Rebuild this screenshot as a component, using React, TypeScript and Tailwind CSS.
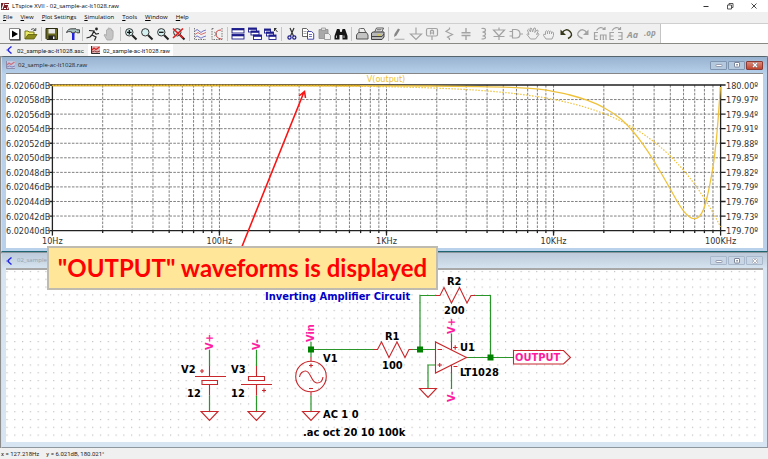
import type { ReactNode } from 'react';
import clsx from 'clsx';

interface Tool {
  label: string;
  icon: ReactNode;
}

interface ToolGroup {
  width: string;
  tools: Tool[];
}

const GRAY = '#a3a3a3';
const NAVY = '#1c1c8c';

const gray = { fill: 'none', stroke: GRAY, strokeWidth: 1.2 };

const magnifier = (
  <>
    <circle cx="6.3" cy="6.3" r="3.7" fill="#d5f0f0" stroke="#333" strokeWidth="1" />
    <path d="M9.2 9.2l4.3 4.3" stroke="#222" strokeWidth="2" />
  </>
);

const miniWindow = (x: number, y: number, w: number, h: number) => (
  <g>
    <rect x={x} y={y} width={w} height={h} fill="#fff" stroke={NAVY} strokeWidth="0.9" />
    <rect x={x} y={y} width={w} height={1.8} fill={NAVY} />
  </g>
);

const groups: ToolGroup[] = [
  {
    width: 'w-[37px]',
    tools: [
      {
        label: 'Run',
        icon: (
          <>
            <path d="M2.5 2.5h10v11h-10z" fill="#fff" stroke="#888" />
            <path d="M13 3v11H3" fill="none" stroke="#222" strokeWidth="1.2" />
            <path d="M5 4.5l6 3.5-6 3.5z" fill="#000" />
          </>
        ),
      },
      {
        label: 'Open',
        icon: (
          <>
            <path d="M2 13V5h3l1 1h5v3" fill="#ecec6a" stroke="#77771a" />
            <path d="M2 13l3-4.5h9L11 13z" fill="#8c8c1c" stroke="#5c5c10" strokeWidth="0.8" />
            <path d="M8 3.5q2.5-2 4.5 0.5M12.8 2v2.5h-2.5" fill="none" stroke="#444" strokeWidth="0.9" />
          </>
        ),
      },
    ],
  },
  {
    width: 'w-[21px]',
    tools: [
      {
        label: 'Save',
        icon: (
          <>
            <path d="M2 2.5h11.5v11H3l-1-1z" fill="#6b6b22" stroke="#2a2a10" />
            <path d="M4.5 3h6.5v4.5H4.5z" fill="#e6e6e6" />
            <path d="M4.5 9.5h7v4h-7z" fill="#222" />
            <path d="M9 10.5h1.5v2.5H9z" fill="#eee" />
          </>
        ),
      },
    ],
  },
  {
    width: 'w-[20px]',
    tools: [
      {
        label: 'Control Panel',
        icon: (
          <>
            <path d="M1.5 6.5Q3 2.5 7 2.8h4l1 1h2.5v3H12l-1-1h-1v1H6.5v-1Q3.5 5 1.5 6.5z" fill="#a9c3c3" stroke="#333" strokeWidth="0.9" />
            <path d="M7 7h2.5v7H7z" fill="#2424dc" />
          </>
        ),
      },
    ],
  },
  {
    width: 'w-[38px]',
    tools: [
      {
        label: 'Start simulation',
        icon: (
          <>
            <circle cx="11.5" cy="3" r="1.4" fill="#222" />
            <path d="M4 4.5l5 0.5-2 4 4 2-1.5 3.5M7 9l-2 2-3.5 1M9 5.5l2 2.5 3-0.5" fill="none" stroke="#222" strokeWidth="1.2" />
          </>
        ),
      },
      {
        label: 'Halt',
        icon: (
          <path
            d="M5 14l-3-5q0.5-1.5 2.5 0.5V4q1-1.5 1.5 0V2.5q1-1.5 1.8 0V3q1-1.3 1.7 0v1.5q1-1 1.6 0.5v5q0 3-1.5 4z"
            fill="#c4c4c4"
            stroke="#a6a6a6"
            strokeWidth="0.8"
          />
        ),
      },
    ],
  },
  {
    width: 'w-[69px]',
    tools: [
      {
        label: 'Zoom in',
        icon: (
          <>
            {magnifier}
            <path d="M4 6.3h4.6M6.3 4v4.6" stroke="#111" strokeWidth="1.3" />
          </>
        ),
      },
      { label: 'Pan', icon: magnifier },
      {
        label: 'Zoom out',
        icon: (
          <>
            {magnifier}
            <path d="M4 6.3h4.6" stroke="#111" strokeWidth="1.3" />
          </>
        ),
      },
      {
        label: 'Zoom full extents',
        icon: (
          <>
            {magnifier}
            <path d="M2 2.5l10 9.5M12 2.5L2 12" stroke="#e02020" strokeWidth="1.7" />
          </>
        ),
      },
    ],
  },
  {
    width: 'w-[38px]',
    tools: [
      {
        label: 'Autorange',
        icon: (
          <>
            <path d="M2.5 2v11.5H14" fill="none" stroke="#777" strokeDasharray="1.5 1" />
            <path d="M3 5.5q2-3.5 4-0.5t4 0l3-1" fill="none" stroke="#6a6ac4" strokeWidth="0.9" />
            <path d="M3 8.5l3-2 3 2 5-2" fill="none" stroke="#d86060" strokeWidth="0.9" />
            <path d="M3 11.5q2-3 4-0.5t4 0l3-1" fill="none" stroke="#6a6ac4" strokeWidth="0.9" />
          </>
        ),
      },
      {
        label: 'Plot limits',
        icon: (
          <>
            <path d="M3 2.5v11h10M3 2.5H5M13 2v12" fill="none" stroke="#777" strokeDasharray="1.5 1" />
            <path d="M12 4Q7 4 7 8t5 5" fill="none" stroke="#cf4242" />
            <path d="M5 6l3 2-3 2" fill="none" stroke="#777" strokeWidth="0.7" />
          </>
        ),
      },
    ],
  },
  {
    width: 'w-[54px]',
    tools: [
      {
        label: 'Tile windows',
        icon: (
          <>
            {miniWindow(2, 2.5, 12, 4.5)}
            {miniWindow(2, 8.5, 12, 4.5)}
          </>
        ),
      },
      {
        label: 'Cascade windows',
        icon: (
          <>
            {miniWindow(1.5, 2, 8, 4)}
            {miniWindow(4, 5, 8, 4)}
            {miniWindow(6.5, 9, 8, 4.5)}
          </>
        ),
      },
      {
        label: 'Close windows',
        icon: (
          <>
            {miniWindow(1.5, 3, 6, 4)}
            {miniWindow(3.5, 6, 7, 4)}
            {miniWindow(6, 9, 7, 4.5)}
            <path d="M11 2.5h2.5M11.5 2v3M11.5 2.5l3 3.5" fill="none" stroke="#333" />
          </>
        ),
      },
    ],
  },
  {
    width: 'w-[70px]',
    tools: [
      {
        label: 'Cut',
        icon: (
          <>
            <path d="M6 2l3.5 8M10 2L6.5 10" stroke="#333" strokeWidth="1.2" />
            <circle cx="5.5" cy="11.5" r="1.6" fill="none" stroke={NAVY} strokeWidth="1.2" />
            <circle cx="10.3" cy="11.5" r="1.6" fill="none" stroke={NAVY} strokeWidth="1.2" />
          </>
        ),
      },
      {
        label: 'Copy',
        icon: (
          <>
            <path d="M2.5 2.5h4l2 2v6h-6z" fill="#fff" stroke="#555" strokeWidth="0.9" />
            <path d="M3.5 5.5h3M3.5 7.5h3" stroke="#888" strokeWidth="0.7" />
            <path d="M7.5 5.5h4l2.2 2v5.7H7.5z" fill="#fff" stroke="#3434a4" strokeWidth="0.9" />
            <path d="M9 8.5h3M9 10.5h3" stroke="#3434a4" strokeWidth="0.7" />
          </>
        ),
      },
      {
        label: 'Paste',
        icon: (
          <>
            <path d="M2 3.5h9v9H2z" fill="#a9a9a9" stroke="#8c8c8c" strokeWidth="0.8" />
            <path d="M4.5 2h4v2.5h-4z" fill="#ddd" stroke="#8c8c8c" strokeWidth="0.7" />
            <path d="M7.5 7.5h4l2 2v4h-6z" fill="#eee" stroke="#8c8c8c" strokeWidth="0.8" />
          </>
        ),
      },
      {
        label: 'Find',
        icon: (
          <>
            <path d="M4 3h2.5l0.8 3h1.4l0.8-3H12l2.5 7v3.5h-5V9h-3v4.5h-5V10z" fill="#151515" />
            <path d="M3.5 9.5v2.5M11 9.5v2.5" stroke="#ddd" strokeWidth="0.8" />
          </>
        ),
      },
    ],
  },
  {
    width: 'w-[37px]',
    tools: [
      {
        label: 'Print preview',
        icon: (
          <>
            <path d="M5 7V3.5Q5 2.5 6.5 2.5H10L12 7" fill="#eee" stroke="#666" />
            <path d="M2.5 9l2-2.5h8l1.5 2.5v4h-11.5z" fill="#c3c3c3" stroke="#555" />
          </>
        ),
      },
      {
        label: 'Print',
        icon: (
          <>
            <path d="M4.5 6.5L6.5 2h7l-2 4.5" fill="#fff" stroke="#444" strokeWidth="0.9" />
            <path d="M7 3.5h4.5M6.3 5h4.5" stroke="#555" strokeWidth="0.7" />
            <path d="M1.5 7l1.5-1h11v5l-2 2.5H1.5z" fill="#b9b9b9" stroke="#444" />
            <path d="M1.5 10.5H12L14 8" fill="none" stroke="#444" />
            <path d="M8 9h2.5" stroke="#e0d020" strokeWidth="1.2" />
          </>
        ),
      },
    ],
  },
  {
    width: 'w-[271px]',
    tools: [
      {
        label: 'Wire',
        icon: (
          <>
            <path d="M3 11l0.5-3L7 2.5l2 1L5.5 9.5z" fill="#858585" />
            <path d="M3.5 13.3H13.5" stroke="#b5b5b5" strokeWidth="1.2" />
          </>
        ),
      },
      { label: 'Ground', icon: <path d="M8 1.5v6.5M2.5 8h11L8 13.5z" {...gray} /> },
      {
        label: 'Label net',
        icon: (
          <>
            <rect x="2.5" y="2.5" width="11" height="7.5" rx="1.5" {...gray} />
            <path d="M6.5 8.5V5q1.5-1.5 3 0v3.5M6.5 7h3M8 10v4" {...gray} />
          </>
        ),
      },
      { label: 'Resistor', icon: <path d="M8.5 1.5v1.5L5 5.5l6.5 3L6.5 11l2 1.5V14" {...gray} /> },
      { label: 'Capacitor', icon: <path d="M8 2v4.5M3.5 6.8h9M3.5 9.5h9M8 9.5V14" {...gray} strokeWidth="1.4" /> },
      {
        label: 'Inductor',
        icon: <path d="M6.5 2.5q4-0.5 4 1.5T7.5 6.2q3 0 3 1.8t-3 2q3 0 3 1.5t-4 1.5" {...gray} />,
      },
      { label: 'Diode', icon: <path d="M8 1.5V4M2.5 4h11L8 10zM2.5 10.5h11M8 10.5V14" {...gray} /> },
      {
        label: 'Component',
        icon: <path d="M4.5 3.5H8q4 0.5 4 4.5t-4 4H4.5zM1.5 5.5h3M1.5 10h3M12 8h3" {...gray} />,
      },
      {
        label: 'Move',
        icon: (
          <path
            d="M5.5 13L2 8.5q0-1.5 2 0L2.5 4q1-1.5 2 0l1 2-0.5-3.5q1.2-1.2 1.8 0.5L7.5 6l1.5-4q1.5-0.5 1.5 1L9.8 6.5 12 4q1.5 0 1 1.5l-1.5 3 2-1q1 0.5 0 1.5l-3 4z"
            {...gray}
            strokeWidth="1"
          />
        ),
      },
      {
        label: 'Drag',
        icon: (
          <path
            d="M5 13l-2.5-3.5q-0.5-2 2-1V5.5q1.2-1.5 2 0 1-1.5 2 0 1.2-1 2 0.5 1.5-0.5 2 1v2.5L11 13zM6.5 5.5V8M8.5 5.5V8M10.5 6v2"
            {...gray}
            strokeWidth="1"
          />
        ),
      },
      {
        label: 'Undo',
        icon: (
          <>
            <path d="M4 7Q8 1.5 12 5.5t-2 7" fill="none" stroke="#38381c" strokeWidth="1.5" />
            <path d="M2.5 3.5V9H8z" fill="#38381c" />
          </>
        ),
      },
      {
        label: 'Redo',
        icon: (
          <>
            <path d="M12 7Q8 1.5 4 5.5t3.5 7" {...gray} strokeWidth="1.4" />
            <path d="M13.5 3.5V9H8z" fill={GRAY} />
          </>
        ),
      },
      {
        label: 'Rotate',
        icon: (
          <path
            d="M6 6.5H2.5v7H6M2.5 10H5.5M8.5 14V9h5.5V14M11.3 9V14M4.5 4.5Q8-0.5 12.5 3M13 1v2.5h-2.5"
            {...gray}
          />
        ),
      },
      {
        label: 'Mirror',
        icon: <path d="M6 6.5H2v7h4M2 10h3.5M10 6.5h4v7h-4M14 10h-3.5M4 4.5Q8-0.5 12 3M12.5 1v2.5H10" {...gray} />,
      },
      {
        label: 'Text',
        icon: (
          <text x="2" y="12" fontSize="9" fill="#999" fontWeight="bold" fontStyle="italic">
            Aa
          </text>
        ),
      },
      {
        label: 'SPICE directive',
        icon: (
          <text x="2" y="10" fontSize="8" fill="#999" fontWeight="bold" fontStyle="italic">
            .op
          </text>
        ),
      },
    ],
  },
];

const menus = ['File', 'View', 'Plot Settings', 'Simulation', 'Tools', 'Window', 'Help'];

function SchematicIcon() {
  return (
    <svg viewBox="0 0 8 8" className="size-2 shrink-0" fill="none" stroke="#2424e8">
      <path d="M5.5 0.5L2.5 3v2l3 2.5" strokeWidth="1.4" />
      <path d="M0.5 4h2" />
    </svg>
  );
}

function WaveIcon({ faded }: { faded?: boolean }) {
  return (
    <svg viewBox="0 0 9 8" className="h-2 w-[9px] shrink-0">
      <rect width="9" height="8" fill={faded ? '#c3c9de' : '#e0b4b4'} />
      <path d="M0.5 0v7.5H9" fill="none" stroke={faded ? '#8c8cac' : '#333'} />
      <path d="M1 4l2-2 2 1.5L8.5 1" fill="none" stroke={faded ? '#cc7080' : '#dc2626'} strokeWidth="1.2" />
      <path d="M1 6l2.5-1L6 6l3-1" fill="none" stroke={faded ? '#7070b8' : '#7c2020'} strokeWidth="0.8" />
    </svg>
  );
}

function TitleBar() {
  return (
    <header className="flex h-3 items-center bg-white pl-px">
      <svg viewBox="0 0 9 9" className="size-[9px]">
        <rect y="1" width="8" height="7" fill="#7a1c24" />
        <path d="M1 7L3 1.5M3 6.5h2M4 2.5h4L6.5 7" stroke="#fff" strokeWidth="1.1" fill="none" />
      </svg>
      <h1 className="ml-0.5 flex-1 text-[6px]/[12px] text-black">LTspice XVII - 02_sample-ac-lt1028.raw</h1>
      <div className="flex gap-2 pr-1.5">
        <button aria-label="Minimize" className="flex w-4 justify-center">
          <svg viewBox="0 0 8 8" className="size-2" fill="none" stroke="#333">
            <path d="M1.5 4.5h5" />
          </svg>
        </button>
        <button aria-label="Restore" className="flex w-4 justify-center">
          <svg viewBox="0 0 8 8" className="size-2" fill="none" stroke="#444" strokeWidth="0.9">
            <path d="M1.5 3h4v4h-4zM3 3V1.5h4v4H5.5" />
          </svg>
        </button>
        <button aria-label="Close" className="flex w-4 justify-center">
          <svg viewBox="0 0 8 8" className="size-2" fill="none" stroke="#333" strokeWidth="0.9">
            <path d="M1.5 1.5l5 5M6.5 1.5l-5 5" />
          </svg>
        </button>
      </div>
    </header>
  );
}

function Toolbar() {
  return (
    <div className="flex h-[21px] border-t border-b border-t-[#cfcfcf] border-b-[#8a8a84] bg-white">
      <div role="toolbar" className="flex items-center border-r border-[#c4c4c4] bg-[#f0f0f0] pl-[5px]">
        {groups.map((group, i) => (
          <div
            key={i}
            className={clsx(
              'flex h-3.5 justify-between px-0.5',
              group.width,
              i < groups.length - 1 && 'border-r border-[#c4c4c4]'
            )}
          >
            {group.tools.map((tool) => (
              <button key={tool.label} aria-label={tool.label} className="flex w-4 items-center justify-center">
                <svg viewBox="0 0 16 16" className="size-4 shrink-0">
                  {tool.icon}
                </svg>
              </button>
            ))}
          </div>
        ))}
      </div>
    </div>
  );
}

function WindowButtons({ active }: { active?: boolean }) {
  const base = clsx(
    'flex h-[9px] w-[17px] items-center justify-center rounded-[1px] border',
    active ? 'border-[#7f95b0] bg-[#b4c8de]' : 'border-[#a9b8cb] bg-[#c9d6e5]'
  );
  return (
    <div className="flex gap-px">
      <button aria-label="Minimize window" className={base}>
        <svg viewBox="0 0 8 6" className="h-1.5 w-2">
          <rect x="1" y="2.5" width="6" height="2" rx="0.5" fill="#fff" stroke="#8089a0" strokeWidth="0.8" />
        </svg>
      </button>
      <button aria-label="Maximize window" className={base}>
        <svg viewBox="0 0 8 6" className="h-1.5 w-2">
          <rect x="1.5" y="0.5" width="5" height="4.5" rx="0.5" fill="#fff" stroke="#737c92" strokeWidth="0.9" />
          <rect x="3.3" y="2" width="1.5" height="1.5" fill="#737c92" />
        </svg>
      </button>
      <button
        aria-label="Close window"
        className={clsx(base, active && 'border-[#8c3a34] bg-linear-to-b from-[#d88a7c] to-[#c0442c]')}
      >
        <svg viewBox="0 0 8 6" className="h-1.5 w-2" fill="none">
          <path d="M2 1l4 4M6 1L2 5" stroke="#747480" strokeWidth="2.2" />
          <path d="M2 1l4 4M6 1L2 5" stroke="#fff" strokeWidth="1.2" />
        </svg>
      </button>
    </div>
  );
}

// Plot area: four decades, 10Hz to 100KHz
const PLOT = { left: 52.4, right: 720.6, top: 85, bottom: 230.6 };
const DECADE = (PLOT.right - PLOT.left) / 4;
const ROW = (PLOT.bottom - PLOT.top) / 10;

const freqLabels = ['10Hz', '100Hz', '1KHz', '10KHz', '100KHz'];
const freqX = (f: number) => PLOT.left + (Math.log10(f) - 1) * DECADE;

const gain: [number, number][] = [
  [52.4, 85.6], [300, 85.7], [430, 86], [480, 86.6], [510, 87.3], [530, 88.3], [543, 89.7], [554, 91.6],
  [570, 95], [587, 100.2], [604, 107.7], [620, 118.3], [633, 131.5], [643, 144.3], [654, 161], [670, 188.5],
  [677, 201], [684, 211.6], [690, 217.2], [694.5, 218.7], [699, 216.8], [703.5, 209.5], [707, 197.5],
  [710.3, 182], [713.3, 165], [716, 143.3], [718.3, 116.7], [720.4, 87],
];

function smooth(pts: [number, number][]) {
  let d = `M${pts[0][0]} ${pts[0][1]}`;
  for (let i = 0; i < pts.length - 1; i++) {
    const p0 = pts[Math.max(i - 1, 0)];
    const [x1, y1] = pts[i];
    const [x2, y2] = pts[i + 1];
    const p3 = pts[Math.min(i + 2, pts.length - 1)];
    const k = (x2 - x1) / 3;
    const m1 = (y2 - p0[1]) / (x2 - p0[0]);
    const m2 = (p3[1] - y1) / (p3[0] - x1);
    d += `C${x1 + k} ${y1 + k * m1} ${x2 - k} ${y2 - k * m2} ${x2} ${y2}`;
  }
  return d;
}

const phase = Array.from({ length: 121 }, (_, i) => {
  const f = 10 ** (1 + i / 30);
  return `${freqX(f)},${85.3 + (f / 1e5) * 141.5}`;
}).join(' ');

function BodePlot() {
  const minor = [0, 1, 2, 3].flatMap((d) => [1, 2, 3, 4, 5, 6, 7, 8, 9].map((n) => n * 10 ** (d + 1))).slice(1);
  const rows = Array.from({ length: 11 }, (_, i) => i);

  return (
    <svg viewBox="6 74 757 174" className="block h-auto w-full bg-white font-['DejaVu_Sans_Condensed','DejaVu_Sans',sans-serif] text-[9px]" fill="#333">
      <g stroke="#808080" strokeDasharray="2.6 1.3" fill="none">
        {minor.map((f) => (
          <path key={f} d={`M${freqX(f)} ${PLOT.top}V${PLOT.bottom}`} />
        ))}
        {rows.slice(1, -1).map((i) => (
          <path key={i} d={`M${PLOT.left} ${PLOT.top + i * ROW}H${PLOT.right}`} />
        ))}
      </g>
      <g stroke="#222" strokeWidth="1.3" fill="none">
        <path d={`M${PLOT.left} ${PLOT.top}H${PLOT.right}V${PLOT.bottom}H${PLOT.left}z`} />
        {minor.map((f) => (
          <path key={f} d={`M${freqX(f)} ${PLOT.bottom}v2.5`} />
        ))}
        {freqLabels.map((label, i) => (
          <path key={label} d={`M${PLOT.left + i * DECADE} ${PLOT.bottom}v5`} />
        ))}
        {rows.map((i) => (
          <path key={i} d={`M${PLOT.left - 3} ${PLOT.top + i * ROW}h3M${PLOT.right} ${PLOT.top + i * ROW}h5`} />
        ))}
      </g>
      {rows.map((i) => (
        <g key={i}>
          <text x="6" y={PLOT.top + i * ROW + 3.5}>{(6.0206 - i * 0.00002).toFixed(5)}dB</text>
          <text x="726" y={PLOT.top + i * ROW + 3.5}>{(180 - i * 0.03).toFixed(2)}º</text>
        </g>
      ))}
      {freqLabels.map((label, i) => (
        <text key={label} x={PLOT.left + i * DECADE} y="244" textAnchor="middle">{label}</text>
      ))}
      <text x="386" y="82" textAnchor="middle" fill="#efc02e">V(output)</text>
      <path d={smooth(gain)} fill="none" stroke="#efc23c" strokeWidth="1.3" />
      <path d={`M${PLOT.left} 85.5H360`} stroke="#c99a14" strokeWidth="1.5" />
      <polyline points={phase} fill="none" stroke="#efc23c" strokeWidth="1.2" strokeDasharray="1.5 1.5" />
    </svg>
  );
}

function GroundSymbol({ x, y }: { x: number; y: number }) {
  return <path d={`M${x - 8.5} ${y}h17l-8.5 9z`} stroke="#c8282c" />;
}

function NetLabel({ x, y, children }: { x: number; y: number; children: ReactNode }) {
  return (
    <text transform={`translate(${x} ${y}) rotate(-90)`} fill="#ff1ca0">
      {children}
    </text>
  );
}

function Schematic() {
  return (
    <svg viewBox="6 270 757 172" className="block h-auto w-full bg-white font-['DejaVu_Sans_Condensed','DejaVu_Sans',sans-serif] text-[11px] font-bold" fill="#000">
      <defs>
        <pattern id="grid-dots" x="3.5" y="268" width="7.79" height="7.79" patternUnits="userSpaceOnUse">
          <rect x="3" y="3" width="1.1" height="1.1" fill="#b4b4b4" />
        </pattern>
      </defs>
      <rect x="6" y="270" width="753" height="169" fill="url(#grid-dots)" />

      <g fill="none" stroke="#2a962a" strokeWidth="1.2">
        <path d="M209.5 350v16M209.5 395.5v16M256.5 350v16M256.5 395.5v16" />
        <path d="M311 342v15M311 395.5v16M311 349.5h63M412 349.5h24" />
        <path d="M420 349.5v-54h16M474.5 295.5h16v62M467 357.5h46.5" />
        <path d="M436 365h-8v23.5M451.5 333.5v8.5M451.5 373v16" />
      </g>
      <g fill="none" stroke="#c8282c" strokeWidth="1.1">
        <path d="M209.5 366v10.5M195 376.5h31M202 380.5h15.5v4H202zM209.5 384.5v11M200 371h4M202 369v4" />
        <path d="M256.5 366v10.5M248.5 376.5h16v4h-16zM241 384.5h31M256.5 384.5v11M262 390.5h4M264 388.5v4" />
        <circle cx="311" cy="376.5" r="15.3" />
        <path d="M311 357v4.5M311 392v3.5M309 365.5h4M311 363.5v4M309 388.5h4" />
        <path d="M299.5 377C300 373 303 371 305.5 371C311 371 311 383 317 383C320 383 322.5 381 323 377" />
        <path d="M373.5 349.5h4l4-7.5 7.5 15.5 8-15.5 8 15.5 4-8h3.5" />
        <path d="M436 295.5h4l4-8 7.5 15.5 8-15.5 7.5 15.5 4-7.5h4" />
        <path d="M435.5 342v31l31-15.5zM451.5 342v8M451.5 365v8" />
        <path d="M437.5 349.5h4.5M437.5 365h4.5M439.7 363v4M453 347.5h4.5M455.2 345.3v4.5M453.5 366.5h4" />
        <path d="M513.5 350.5h50l7 7-7 6.5h-50z" />
        <GroundSymbol x={209.5} y={411.5} />
        <GroundSymbol x={256.5} y={411.5} />
        <GroundSymbol x={311} y={411.5} />
        <GroundSymbol x={428} y={388.5} />
      </g>
      <g fill="#008200">
        <rect x="308" y="346.5" width="6" height="6" />
        <rect x="417" y="346.5" width="6" height="6" />
        <rect x="487.5" y="354.5" width="6" height="6" />
      </g>

      <NetLabel x={213} y={350}>V+</NetLabel>
      <NetLabel x={260} y={350}>V-</NetLabel>
      <NetLabel x={314} y={342}>Vin</NetLabel>
      <NetLabel x={455} y={334}>V+</NetLabel>
      <NetLabel x={455} y={402}>V-</NetLabel>
      <text x="515" y="361" fill="#ff1ca0">OUTPUT</text>
      <text x="265" y="300" fill="#0000c8">Inverting Amplifier Circuit</text>
      <text x="181" y="373">V2</text>
      <text x="187" y="397">12</text>
      <text x="231" y="373">V3</text>
      <text x="231" y="397">12</text>
      <text x="323" y="362">V1</text>
      <text x="323" y="418">AC 1 0</text>
      <text x="303" y="436">.ac oct 20 10 100k</text>
      <text x="385" y="340">R1</text>
      <text x="382" y="369">100</text>
      <text x="447" y="285">R2</text>
      <text x="444" y="314">200</text>
      <text x="460" y="351">U1</text>
      <text x="460" y="376">LT1028</text>
    </svg>
  );
}

function Callout() {
  return (
    <>
      <svg viewBox="0 0 768 459" className="pointer-events-none absolute inset-x-0 top-0 h-auto w-full" fill="none" stroke="#fa1414" strokeWidth="1.6">
        <path d="M242 246.5L304 92M299 96l5.5-4.5 1 6.5" />
      </svg>
      <p className="absolute top-[246px] left-[47px] flex h-11 w-[391px] items-center justify-center border-2 border-[#bfbbae] bg-[#ffe699] font-[Lato,'Open_Sans',sans-serif] text-[24px]/[24px] font-bold whitespace-nowrap text-[#ff0000]">
        "OUTPUT" waveforms is displayed
      </p>
    </>
  );
}

export default function App() {
  return (
    <div className="relative flex min-h-screen flex-col bg-[#f0f0f0] font-['Open_Sans','Noto_Sans',sans-serif]">
      <TitleBar />
      <nav className="flex h-[11px] items-center gap-2 pl-[3px] text-[6px]/[11px] text-black">
        {menus.map((menu) => (
          <button key={menu}>
            <span className="underline decoration-1">{menu[0]}</span>
            {menu.slice(1)}
          </button>
        ))}
      </nav>
      <Toolbar />
      <div className="flex h-3 items-stretch pl-1 font-[Roboto,sans-serif] text-[6px] text-[#222]">
        <button className="flex w-[84px] items-center gap-[3px] pl-0.5">
          <SchematicIcon />
          02_sample-ac-lt1028.asc
        </button>
        <button className="flex w-[85px] items-center gap-[3px] bg-white pl-[3px]">
          <WaveIcon />
          02_sample-ac-lt1028.raw
        </button>
      </div>

      <main className="bg-[#8e8e8e] pl-px">
        <section className="rounded-t-[3px] border border-t-[#56646e] border-r-[#4d8088] border-b-[#1f6672] border-l-[#d5dfe8] bg-[#b9d1ea] px-1 pb-[3px]">
          <div className="-mx-1 flex h-4 items-center bg-linear-to-b from-[#98b3d0] to-[#b6cfe9] pr-1">
            <div className="flex flex-1 items-center gap-[3px] pl-1">
              <WaveIcon faded />
              <h2 className="text-[6px] text-[#222]">02_sample-ac-lt1028.raw</h2>
            </div>
            <WindowButtons active />
          </div>
          <div className="border-t border-[#868686]">
            <BodePlot />
          </div>
        </section>
        <section className="rounded-t-[3px] border border-[#8e979e] border-l-[#d5dfe8] bg-[#d7e4f2] px-1 pb-[5px]">
          <div className="-mx-1 flex h-[15px] items-center justify-between bg-linear-to-b from-[#bccad9] to-[#d5e2f0] pr-1">
            <div className="flex items-center gap-[3px] pl-1">
              <SchematicIcon />
              <h2 className="w-[30px] overflow-hidden text-[6px] whitespace-nowrap text-[#999fa8]">02_sample-ac-lt1028.asc</h2>
            </div>
            <WindowButtons />
          </div>
          <div className="border-t-2 border-[#a8a8a8]">
            <Schematic />
          </div>
        </section>
      </main>

      <footer className="flex h-[11px] items-center gap-[7px] pl-px font-[Roboto,sans-serif] text-[6px] text-[#222]">
        <span>x = 127.218Hz</span>
        <span>y = 6.021dB, 180.021°</span>
      </footer>
      <Callout />
    </div>
  );
}
